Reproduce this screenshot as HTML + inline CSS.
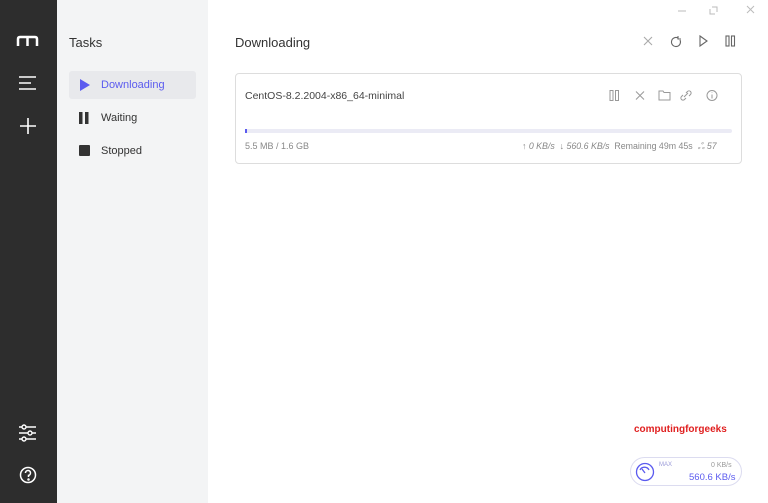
<!DOCTYPE html><html><head><style>
*{margin:0;padding:0;box-sizing:border-box}
body{width:768px;height:503px;overflow:hidden;font-family:"Liberation Sans",sans-serif;background:#fff;position:relative}
.side{position:absolute;left:0;top:0;width:57px;height:503px;background:#2d2d2d}
.sub{position:absolute;left:57px;top:0;width:151px;height:503px;background:#f3f4f5}
.t{position:absolute;white-space:nowrap}
svg{position:absolute}
</style></head><body>
<div class="side">
<svg style="left:16px;top:35px" width="24" height="12"><path d="M2 11V4Q2 2 4 2H19Q21 2 21 4V11M11.5 2V11" stroke="#fff" stroke-width="2.5" fill="none"/></svg>
<svg style="left:19px;top:76px" width="18" height="14"><path d="M0 1H17M0 7H12M0 13H17" stroke="#fff" stroke-width="1.6"/></svg>
<svg style="left:20px;top:118px" width="16" height="16"><path d="M8 0V16M0 8H16" stroke="#fff" stroke-width="1.6"/></svg>
<svg style="left:19px;top:424px" width="18" height="18" fill="none" stroke="#fff" stroke-width="1.4"><path d="M0 3H17M0 9H17M0 15H17"/><circle cx="5" cy="3" r="2" fill="#2d2d2d"/><circle cx="11" cy="9" r="2" fill="#2d2d2d"/><circle cx="5" cy="15" r="2" fill="#2d2d2d"/></svg>
<svg style="left:19px;top:466px" width="18" height="18" fill="none" stroke="#fff" stroke-width="1.5"><circle cx="9" cy="9" r="7.5"/><path d="M6.5 7a2.5 2.5 0 1 1 3 2.4V11"/><circle cx="9.5" cy="13.5" r=".5" fill="#fff"/></svg>
</div>
<div class="sub">
<div class="t" style="left:12px;top:35px;font-size:13px;color:#333">Tasks</div>
<div style="position:absolute;left:12px;top:71px;width:127px;height:28px;background:#e8e9ec;border-radius:3px"></div>
<svg style="left:23px;top:79px" width="10" height="12"><path d="M0 0L10 6L0 12Z" fill="#5b5bef"/></svg>
<div class="t" style="left:44px;top:79px;font-size:11px;color:#5b5bef">Downloading</div>
<svg style="left:22px;top:112px" width="10" height="12"><rect x="0" y="0" width="3.5" height="12" fill="#333"/><rect x="6" y="0" width="3.5" height="12" fill="#333"/></svg>
<div class="t" style="left:44px;top:112px;font-size:11px;color:#333">Waiting</div>
<svg style="left:22px;top:145px" width="11" height="12"><rect width="11" height="11" fill="#333" rx="1"/></svg>
<div class="t" style="left:44px;top:145px;font-size:11px;color:#333">Stopped</div>
</div>
<svg style="left:676px;top:3px" width="80" height="14" fill="none" stroke="#bbb" stroke-width="1"><path d="M2 8H10"/><path d="M36 4h5v5M39 11h-5v-5"/><path d="M71 3l7 7M78 3l-7 7"/></svg>
<div class="t" style="left:235px;top:35px;font-size:13px;color:#333">Downloading</div>
<svg style="left:642px;top:35px" width="100" height="14" fill="none" stroke="#666" stroke-width="1.1"><path d="M2 2l8 8M10 2l-8 8" stroke="#aaa"/><path d="M36 3a4.5 4.5 0 1 0 2 2M36 1v3h3"/><path d="M58 1l7 5l-7 5Z"/><rect x="84" y="1" width="3" height="10"/><rect x="89.5" y="1" width="3" height="10"/></svg>
<div style="position:absolute;left:235px;top:73px;width:507px;height:91px;border:1px solid #ddd;border-radius:4px"></div>
<div class="t" style="left:245px;top:90px;font-size:10.5px;color:#444">CentOS-8.2.2004-x86_64-minimal</div>
<svg style="left:609px;top:89px" width="112" height="14" fill="none" stroke="#999" stroke-width="1"><rect x="1" y="1.5" width="3" height="10"/><rect x="6.5" y="1.5" width="3" height="10"/><path d="M27 2.5l8 8M35 2.5l-8 8"/><path d="M50 2h4l1 1.5h6V11H50Z"/><path d="M75 8l4-4M74 6l-1.5 1.5a2 2 0 0 0 3 3L77 9M80 7l1.5-1.5a2 2 0 0 0-3-3L77 4"/><circle cx="103" cy="6.5" r="5"/><path d="M103 5.5V9.5M103 3.5V4"/></svg>
<div style="position:absolute;left:245px;top:129px;width:487px;height:4px;background:#ebebf5;border-radius:2px"><div style="width:2px;height:4px;background:#5b5bef"></div></div>
<div class="t" style="left:245px;top:141px;font-size:9px;color:#888">5.5 MB / 1.6 GB</div>
<div class="t" style="left:522px;top:141px;font-size:8.8px;color:#888"><i>↑ 0 KB/s</i>&nbsp;&nbsp;<i>↓ 560.6 KB/s</i>&nbsp;&nbsp;Remaining 49m 45s&nbsp;&nbsp;<i>ஃ 57</i></div>
<div class="t" style="left:634px;top:424px;font-size:10px;font-weight:bold;color:#e02020">computingforgeeks</div>
<div style="position:absolute;left:630px;top:457px;width:112px;height:29px;border:1px solid #dcdcf0;border-radius:15px"></div>
<svg style="left:635px;top:462px" width="20" height="20" fill="none" stroke="#5b5bef" stroke-width="1.3"><circle cx="10" cy="10" r="8.5"/><path d="M5 8a5 5 0 0 1 9 0M10 11l-3-4"/></svg>
<div class="t" style="left:659px;top:462px;font-size:6px;color:#9a9ad8">MAX</div>
<div class="t" style="left:711px;top:462px;font-size:7px;color:#999">0 KB/s</div>
<div class="t" style="left:689px;top:472px;font-size:9.5px;color:#5b5bef">560.6 KB/s</div>
</body></html>
